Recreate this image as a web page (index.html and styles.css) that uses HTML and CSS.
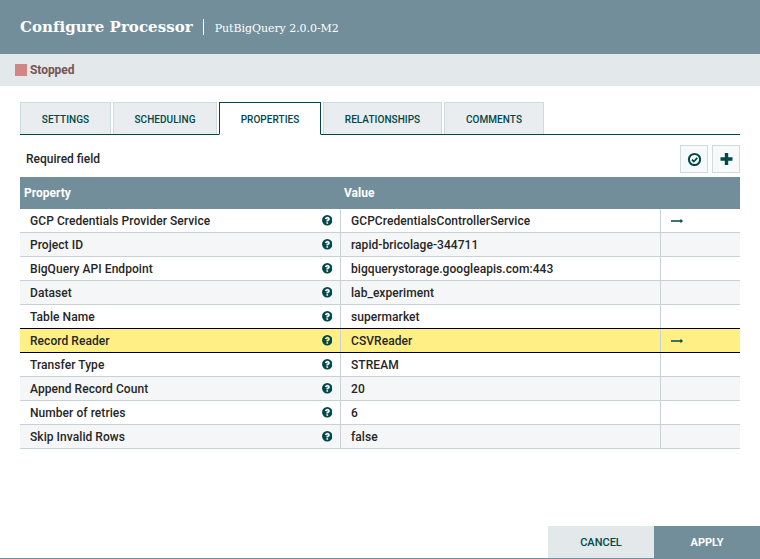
FILE: index.html
```html
<!DOCTYPE html>
<html lang="en">
<head>
<meta charset="utf-8">
<title>Configure Processor</title>
<link rel="stylesheet" href="styles.css">
</head>
<body>
<div class="dialog">
  <header class="head">
    <h1 class="title">Configure Processor</h1>
    <span class="subtitle">PutBigQuery 2.0.0-M2</span>
  </header>
  <div class="status"><span class="swatch"></span><span class="status-text">Stopped</span></div>
  <main class="content">
    <nav class="tabs">
      <div class="tab t1">SETTINGS</div>
      <div class="tab t2">SCHEDULING</div>
      <div class="tab t3 active">PROPERTIES</div>
      <div class="tab t4">RELATIONSHIPS</div>
      <div class="tab t5">COMMENTS</div>
    </nav>
    <div class="toolbar">
      <span class="required">Required field</span>
      <div class="tools">
        <div class="tool"><svg width="14" height="14" viewBox="0 0 14 14"><circle cx="7.5" cy="7.500" r="5.600" fill="none" stroke="#004849" stroke-width="2"/><path d="M4.900 7.600 6.800 9.500 10.300 5.800" fill="none" stroke="#004849" stroke-width="1.800"/></svg></div>
        <div class="tool"><svg width="14" height="14" viewBox="0 0 14 14"><path d="M5.800 1h3.400v4.300h4.300v3.400H9.200V13H5.800V8.700H1.500V5.300h4.300z" fill="#004849"/></svg></div>
      </div>
    </div>
    <div class="grid">
      <div class="grid-head"><div class="h-prop">Property</div><div class="h-val">Value</div></div>
      <div class="row"><div class="prop"><span>GCP Credentials Provider Service</span><svg class="help" viewBox="0 0 10 10"><use href="#q"/></svg></div><div class="val">GCPCredentialsControllerService</div><div class="act"><svg class="arrow" viewBox="0 0 12 6"><path d="M0 2.300h9.500V.8L12 3 9.500 5.200V3.700H0z"/></svg></div></div>
      <div class="row alt"><div class="prop"><span>Project ID</span><svg class="help" viewBox="0 0 10 10"><use href="#q"/></svg></div><div class="val">rapid-bricolage-344711</div><div class="act"></div></div>
      <div class="row"><div class="prop"><span>BigQuery API Endpoint</span><svg class="help" viewBox="0 0 10 10"><use href="#q"/></svg></div><div class="val">bigquerystorage.googleapis.com:443</div><div class="act"></div></div>
      <div class="row alt"><div class="prop"><span>Dataset</span><svg class="help" viewBox="0 0 10 10"><use href="#q"/></svg></div><div class="val">lab_experiment</div><div class="act"></div></div>
      <div class="row"><div class="prop"><span>Table Name</span><svg class="help" viewBox="0 0 10 10"><use href="#q"/></svg></div><div class="val">supermarket</div><div class="act"></div></div>
      <div class="row sel"><div class="prop"><span>Record Reader</span><svg class="help" viewBox="0 0 10 10"><use href="#q"/></svg></div><div class="val">CSVReader</div><div class="act"><svg class="arrow" viewBox="0 0 12 6"><path d="M0 2.300h9.500V.8L12 3 9.500 5.200V3.700H0z"/></svg></div></div>
      <div class="row"><div class="prop"><span>Transfer Type</span><svg class="help" viewBox="0 0 10 10"><use href="#q"/></svg></div><div class="val">STREAM</div><div class="act"></div></div>
      <div class="row alt"><div class="prop"><span>Append Record Count</span><svg class="help" viewBox="0 0 10 10"><use href="#q"/></svg></div><div class="val">20</div><div class="act"></div></div>
      <div class="row"><div class="prop"><span>Number of retries</span><svg class="help" viewBox="0 0 10 10"><use href="#q"/></svg></div><div class="val">6</div><div class="act"></div></div>
      <div class="row alt"><div class="prop"><span>Skip Invalid Rows</span><svg class="help" viewBox="0 0 10 10"><use href="#q"/></svg></div><div class="val">false</div><div class="act"></div></div>
    </div>
  </main>
  <footer class="foot">
    <div class="btn cancel">CANCEL</div>
    <div class="btn apply">APPLY</div>
  </footer>
</div>
<svg class="defs" width="0" height="0"><defs><g id="q"><path fill-rule="evenodd" fill="#004849" d="M5 0a5 5 0 1 0 0 10A5 5 0 0 0 5 0zM4.200 6.900h1.600v1.500H4.200zM2.800 3.900C2.900 2.500 3.900 1.600 5.100 1.600c1.300 0 2.300.9 2.300 2.100 0 .9-.5 1.400-1.100 1.700-.4.300-.5.400-.5.900H4.200c0-1 .3-1.500.9-1.900.4-.2.600-.4.600-.6 0-.3-.3-.5-.6-.5-.4 0-.7.300-.7.800z"/></g></defs></svg>
</body>
</html>
```
FILE: styles.css
```css
* { box-sizing: border-box; }
html, body { margin: 0; padding: 0; }
body {
  width: 760px;
  height: 559px;
  overflow: hidden;
  background: #fff;
  font-family: Roboto, "Liberation Sans", sans-serif;
}
.dialog { display: flex; flex-direction: column; height: 559px; }
.defs { position: absolute; }

.head {
  height: 54px;
  background: #728e9b;
  display: flex;
  align-items: center;
  padding: 0 0 0 20px;
  color: #fff;
}
.title {
  margin: 0;
  font-family: "DejaVu Serif", serif;
  font-size: 15px;
  font-weight: 700;
  letter-spacing: 0.05px;
  padding-right: 10px;
  border-right: 1px solid #fff;
  line-height: 16px;
  white-space: nowrap;
}
.subtitle {
  font-family: "DejaVu Serif", serif;
  font-size: 11px;
  letter-spacing: -0.05px;
  margin-left: 11px;
  margin-top: 2px;
}

.status {
  height: 32px;
  background: #e3e8eb;
  display: flex;
  align-items: center;
  padding: 0 0 0 15px;
}
.swatch { width: 12px; height: 12px; background: #d18686; margin-top: -1px; }
.status-text { font-size: 12px; font-weight: 700; color: #775351; margin-left: 3px; letter-spacing: -0.05px; }

.content { flex: 1; padding: 16px 20px 0; }

.tabs {
  display: flex;
  gap: 2px;
  height: 33px;
  border-bottom: 1px solid #004849;
}
.tab {
  height: 32px;
  background: #e9edf0;
  border: 1px solid #cfdcdf;
  border-bottom: 0;
  color: #004849;
  font-size: 10px;
  font-weight: 500;
  letter-spacing: 0.05px;
  display: flex;
  align-items: center;
  justify-content: center;
  padding-top: 2px;
}
.t1 { width: 91px; }
.t2 { width: 104px; }
.t3 { width: 102px; }
.t4 { width: 119px; }
.t5 { width: 100px; }
.tab.active {
  height: 33px;
  background: #fff;
  border: 1px solid #004849;
  border-bottom: 1px solid #fff;
}

.toolbar {
  height: 42px;
  display: flex;
  align-items: flex-start;
  justify-content: space-between;
  padding-top: 10px;
}
.required { font-size: 12px; font-weight: 500; color: #262626; padding: 7px 0 0 6px; }
.tools { display: flex; gap: 4px; }
.tool {
  width: 28px;
  height: 28px;
  background: #f7f9fa;
  border: 1px solid #cfdcdf;
  display: flex;
  align-items: center;
  justify-content: center;
}

.grid-head {
  height: 32px;
  background: #728e9b;
  color: #fff;
  font-size: 12px;
  font-weight: 700;
  display: flex;
  align-items: center;
}
.h-prop { width: 324px; padding-left: 4px; }
.h-val { flex: 1; }

.row {
  height: 24px;
  display: flex;
  border-bottom: 1px solid #c7d2d7;
  font-size: 12px;
  font-weight: 500;
  letter-spacing: 0.06px;
  color: #262626;
  background: #fff;
}
.row.alt { background: #f4f6f7; }
.row.sel {
  background: #ffef85;
  border-top: 1px solid #000;
  border-bottom: 1px solid #000;
  margin-top: -1px;
  height: 25px;
}
.prop {
  width: 321px;
  display: flex;
  align-items: center;
  justify-content: space-between;
  padding: 0 8px 0 10px;
  border-right: 1px solid #c7d2d7;
}
.val {
  width: 320px;
  display: flex;
  align-items: center;
  padding-left: 10px;
  border-right: 1px solid #c7d2d7;
}
.act { flex: 1; display: flex; align-items: center; padding-left: 10px; }
.help { width: 10.5px; height: 10.5px; }
.arrow { width: 12px; height: 6px; fill: #004849; }

.foot { display: flex; justify-content: flex-end; border-bottom: 1px solid #728e9b; height: 33px; }
.btn {
  width: 106px;
  height: 32px;
  font-size: 11px;
  font-weight: 500;
  display: flex;
  align-items: center;
  justify-content: center;
}
.cancel { background: #e3e8eb; color: #004849; }
.apply { background: #728e9b; color: #fff; font-weight: 700; }
```
